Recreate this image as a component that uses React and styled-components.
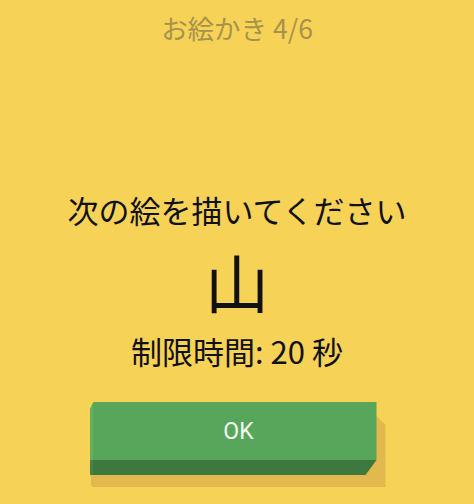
import React from "react";
import styled, { createGlobalStyle } from "styled-components";

const Global = createGlobalStyle`
  html, body { margin: 0; padding: 0; background: #f6d257; }
  body { font-family: "Noto Sans CJK JP", "Noto Sans", sans-serif; }
`;

const Page = styled.div`
  width: 474px;
  height: 504px;
  display: flex;
  flex-direction: column;
  align-items: center;
  background: #f6d257;
  overflow: hidden;
`;

const Header = styled.div`
  height: 56px;
  line-height: 56px;
  font-size: 26.5px;
  color: #a8924b;
  margin-bottom: 134px;
`;

const Prompt = styled.div`
  height: 40px;
  line-height: 40px;
  font-size: ${(p) => p.$size}px;
  color: #111;
  margin-bottom: ${(p) => p.$after}px;
`;

const Word = styled.div`
  height: 70px;
  line-height: 70px;
  font-size: 64px;
  color: #111;
  margin-bottom: 16px;
`;

const ButtonWrap = styled.div`
  position: relative;
  width: 287px;
  padding: 0 9px 12px 0;
  margin-left: 1px;
  cursor: pointer;
  &::before {
    content: "";
    position: absolute;
    left: 1px;
    top: 14px;
    right: 0;
    bottom: 0;
    background: #e3b94f;
    clip-path: polygon(0 0, calc(100% - 9px) 0, 100% 9px, 100% 100%, 2px 100%, 0 calc(100% - 2px));
  }
`;

const Face = styled.div`
  position: relative;
  height: 58px;
  display: flex;
  align-items: center;
  justify-content: center;
  padding-left: 8px;
  box-sizing: border-box;
  background: #57a65b;
  border-left: 3px solid #60b064;
  clip-path: polygon(4px 0, 100% 0, 100% 100%, 0 100%, 0 8px);
  font-family: Roboto, "Noto Sans", sans-serif;
  font-size: 23px;
  color: #f4fbef;
`;

const Side = styled.div`
  position: relative;
  height: 15px;
  background: #3d783f;
  border-left: 3px solid #468446;
  clip-path: polygon(0 0, 100% 0, calc(100% - 11px) 100%, 0 100%);
`;

export default function App() {
  return (
    <Page>
      <Global />
      <Header>お絵かき 4/6</Header>
      <Prompt $size={31} $after={15}>次の絵を描いてください</Prompt>
      <Word>山</Word>
      <Prompt $size={31} $after={31}>制限時間: 20 秒</Prompt>
      <ButtonWrap>
        <Face>OK</Face>
        <Side />
      </ButtonWrap>
    </Page>
  );
}
